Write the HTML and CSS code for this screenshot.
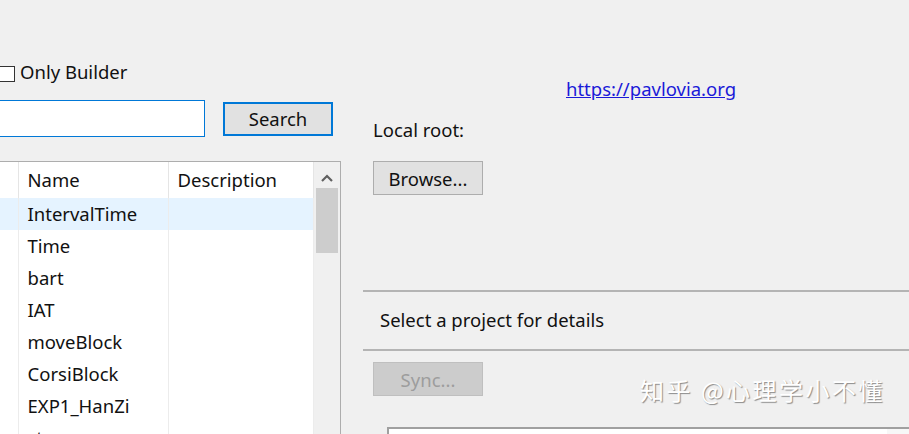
FILE: index.html
```html
<!DOCTYPE html>
<html lang="en">
<head>
    <meta charset="UTF-8">
    <meta name="viewport" content="width=device-width, initial-scale=1.0">
    <title>Pavlovia projects</title>
    <link rel="stylesheet" href="styles.css">
</head>
<body>
    <div class="window">
        <div class="left">
            <label class="only-builder">
                <span class="checkbox"></span>
                <span>Only Builder</span>
            </label>

            <div class="search-row">
                <input type="text" class="search-input">
                <button type="button" class="search-btn">Search</button>
            </div>

            <div class="list">
                <table class="projects">
                    <colgroup>
                        <col class="col-icon">
                        <col class="col-name">
                        <col class="col-desc">
                    </colgroup>
                    <tr class="head">
                        <td></td>
                        <td>Name</td>
                        <td>Description</td>
                    </tr>
                    <tr class="selected"><td></td><td>IntervalTime</td><td></td></tr>
                    <tr><td></td><td>Time</td><td></td></tr>
                    <tr><td></td><td>bart</td><td></td></tr>
                    <tr><td></td><td>IAT</td><td></td></tr>
                    <tr><td></td><td>moveBlock</td><td></td></tr>
                    <tr><td></td><td>CorsiBlock</td><td></td></tr>
                    <tr><td></td><td>EXP1_HanZi</td><td></td></tr>
                    <tr><td></td><td>stroop</td><td></td></tr>
                </table>
                <div class="scrollbar">
                    <svg class="arrow-up" width="14" height="10" viewBox="0 0 14 10">
                        <polyline points="2,8 7,3 12,8" fill="none" stroke="#606060" stroke-width="2.2"/>
                    </svg>
                    <div class="thumb"></div>
                </div>
            </div>
        </div>

        <div class="right">
            <div class="link-row">
                <a href="#" class="pavlovia-link">https://pavlovia.org</a>
            </div>
            <div class="label">Local root:</div>
            <button type="button" class="win-btn">Browse...</button>

            <div class="separator first"></div>
            <div class="details">Select a project for details</div>
            <div class="separator"></div>

            <button type="button" class="win-btn" disabled>Sync...</button>

            <div class="text-box">
                <div class="box-scroll"></div>
            </div>
        </div>

        <div class="watermark">知乎 @心理学小不懂</div>
    </div>
</body>
</html>
```

FILE: styles.css
```css
body{
    margin: 0;
    background: #f0f0f0;
    font-family: "Noto Sans", "Noto Sans CJK SC", sans-serif;
    font-size: 18.5px;
    line-height: 24px;
    color: #111;
    overflow: hidden;
}
.window{
    position: relative;
    display: flex;
    width: 909px;
    height: 434px;
    overflow: hidden;
}

/* left side: filter, search and project list */
.left{
    width: 341px;
    flex-shrink: 0;
    padding-top: 60px;
}
.only-builder{
    display: flex;
    align-items: center;
    gap: 5px;
    height: 24px;
}
.checkbox{
    width: 14px;
    height: 14px;
    margin-left: -1px;
    border: 1px solid #333;
    background: #fff;
    margin-top: 3px;
}
.search-row{
    display: flex;
    align-items: center;
    margin-top: 16px;
}
.search-input{
    width: 207px;
    height: 37px;
    box-sizing: border-box;
    margin: 0 0 0 -2px;
    border: 1px solid #0078d7;
    background: #fff;
    outline: none;
}
.search-btn{
    width: 110px;
    height: 34px;
    margin-left: 18px;
    box-sizing: border-box;
    border: 2px solid #0078d7;
    background: #e1e1e1;
    font-family: inherit;
    font-size: 18.5px;
    color: #111;
    padding: 0;
}
.list{
    display: flex;
    margin-top: 24px;
    height: 300px;
    border: 1px solid #adadad;
    border-left: none;
    background: #fff;
}
.projects{
    width: 313px;
    table-layout: fixed;
    border-collapse: collapse;
    align-self: flex-start;
}
.col-icon{ width: 18px; }
.col-name{ width: 150px; }
.col-desc{ width: 145px; }
.projects td{
    height: 32px;
    padding: 0 0 0 9px;
    border-right: 1px solid #ececec;
    white-space: nowrap;
    overflow: hidden;
}
.projects .head td{
    height: 36px;
    border-right-color: #e5e5e5;
}
.projects .selected td{
    background: #e5f3ff;
}
.scrollbar{
    width: 27px;
    background: #f0f0f0;
    display: flex;
    flex-direction: column;
    align-items: center;
}
.arrow-up{
    margin-top: 11px;
}
.thumb{
    width: 22px;
    height: 65px;
    margin-top: 5px;
    background: #cdcdcd;
}

/* right side: link, root folder and details */
.right{
    flex: 1;
    padding-top: 77px;
}
.link-row{
    padding-left: 225px;
}
.pavlovia-link{
    color: #1a1ad8;
}
.label{
    margin-top: 17px;
    padding-left: 32px;
}
.win-btn{
    display: block;
    width: 110px;
    height: 34px;
    margin: 19px 0 0 32px;
    box-sizing: border-box;
    border: 1px solid #adadad;
    background: #e1e1e1;
    font-family: inherit;
    font-size: 18.5px;
    color: #111;
    padding: 0;
}
.win-btn:disabled{
    background: #cccccc;
    border-color: #bfbfbf;
    color: #9d9d9d;
}
.separator{
    margin-left: 22px;
    height: 2px;
    background: #b4b4b4;
}
.separator.first{
    margin-top: 95px;
}
.details{
    padding: 16px 0 17px 39px;
}
.separator + .win-btn{
    margin-top: 11px;
}
.text-box{
    display: flex;
    justify-content: flex-end;
    margin: 31px 0 0 46px;
    height: 60px;
    border-top: 2px solid #a0a0a0;
    border-left: 2px solid #a0a0a0;
    background: #fff;
}
.box-scroll{
    width: 22px;
    background: #f7f7f7;
}

.watermark{
    position: absolute;
    left: 640px;
    top: 378px;
    font-family: "Noto Sans CJK SC", sans-serif;
    font-size: 24px;
    color: #fff;
    text-shadow: 1px 1px 1px #8a8a8a;
    letter-spacing: 2.5px;
}
```
